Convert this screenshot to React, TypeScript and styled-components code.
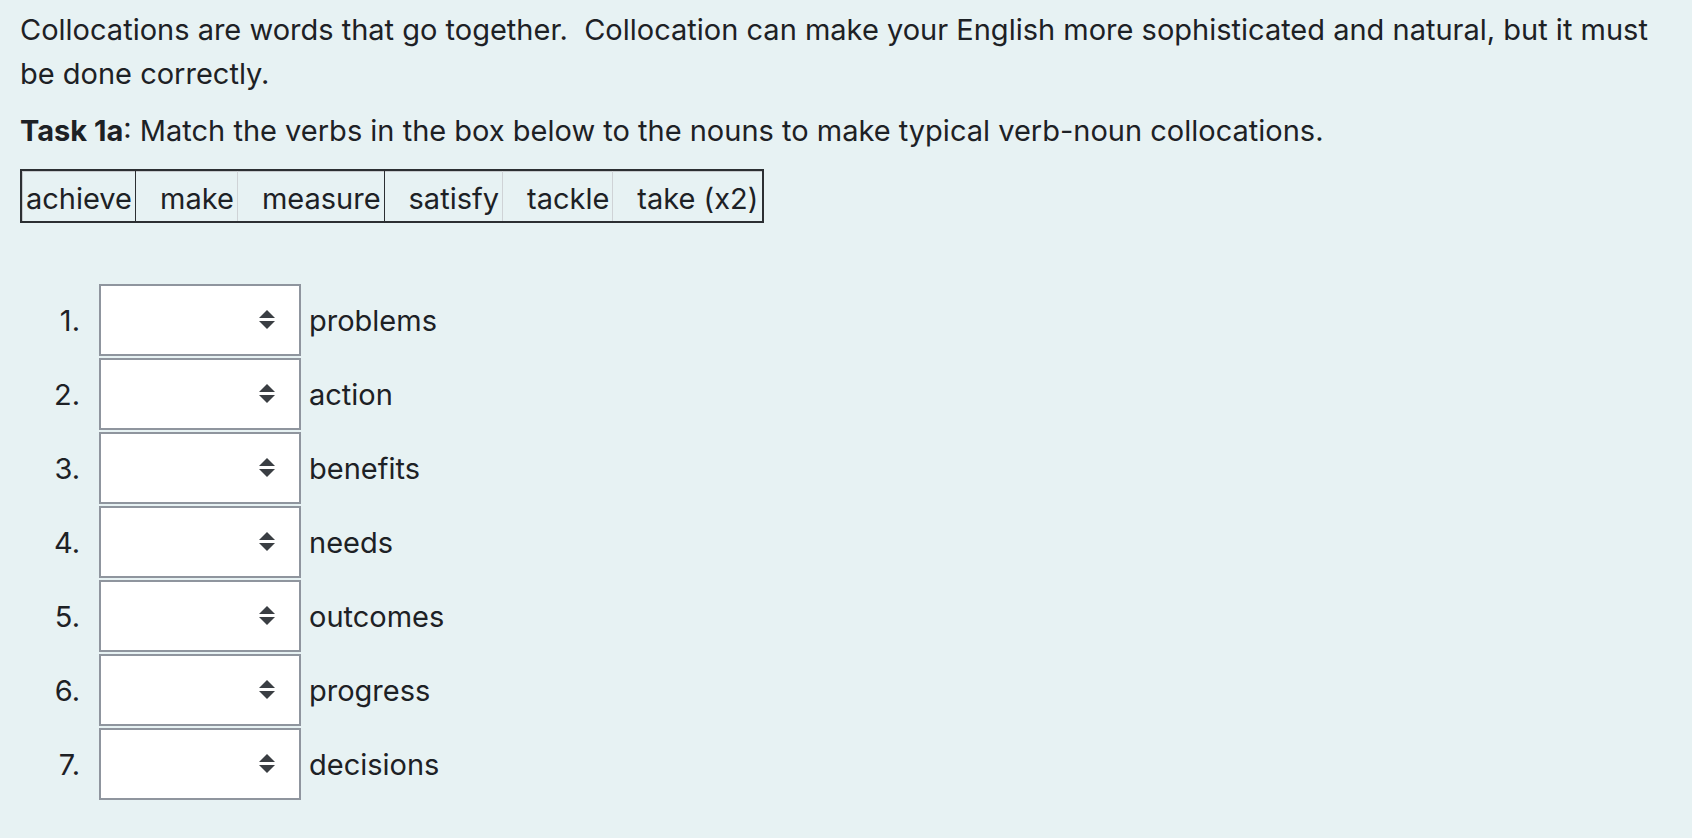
import styled, { createGlobalStyle } from "styled-components";

// ── Styles ────────────────────────────────────────────────────────────────────

const GlobalStyle = createGlobalStyle`
  html, body {
    margin: 0;
    padding: 0;
    background: #e7f2f3;
  }
  body {
    font-family: Inter, "Noto Sans", "Liberation Sans", sans-serif;
    color: #1d2125;
  }
`;

const Page = styled.div`
  padding: 8px 20px 40px 20px;
  font-size: 29px;
  line-height: 44px;
`;

const Para = styled.p<{ $gap: number }>`
  margin: 0 0 ${({ $gap }) => $gap}px 0;
  max-width: 1640px;
`;

const WordBox = styled.div`
  display: inline-flex;
  border: 2px solid #2c2f32;
  box-shadow: inset 1px 1px 0 #c6cacd;
  margin-bottom: 61px;
`;

const Word = styled.span<{ $first?: boolean; $divider: "dark" | "light" | "none" }>`
  padding: 5px 3px 0 ${({ $first }) => ($first ? 4 : 24)}px;
  line-height: 45px;
  border-right: 1px solid
    ${({ $divider }) =>
      $divider === "dark" ? "#2c2f32" : $divider === "light" ? "#cfd3d6" : "transparent"};
`;

const Items = styled.ol`
  list-style: none;
  margin: 0;
  padding: 0;
  display: flex;
  flex-direction: column;
  gap: 2px;
`;

const Item = styled.li`
  display: flex;
  align-items: center;
`;

const Num = styled.span`
  width: 60px;
  text-align: right;
  padding-top: 2px;
`;

const SelectWrap = styled.div`
  position: relative;
  margin-left: 19px;
  width: 202px;
  height: 72px;
`;

const Select = styled.select`
  appearance: none;
  box-sizing: border-box;
  width: 100%;
  height: 100%;
  margin: 0;
  border: 2px solid #8f959e;
  border-radius: 0;
  background: #fff;
  font: inherit;
  color: inherit;
`;

const Arrow = styled.svg`
  position: absolute;
  right: 26px;
  top: 26px;
  pointer-events: none;
`;

const Noun = styled.span`
  margin-left: 8px;
  padding-top: 2px;
`;

// ── Data ──────────────────────────────────────────────────────────────────────

const verbs: { text: string; divider: "dark" | "light" | "none" }[] = [
  { text: "achieve", divider: "dark" },
  { text: "make", divider: "light" },
  { text: "measure", divider: "dark" },
  { text: "satisfy", divider: "light" },
  { text: "tackle", divider: "light" },
  { text: "take (x2)", divider: "none" },
];

const nouns = ["problems", "action", "benefits", "needs", "outcomes", "progress", "decisions"];

// ── Component ─────────────────────────────────────────────────────────────────

export default function App() {
  return (
    <>
      <GlobalStyle />
      <Page>
        <Para $gap={13}>
          Collocations are words that go together.{"\u00a0 "}Collocation can make your English
          more sophisticated and natural, but it must be done correctly.
        </Para>
        <Para $gap={16}>
          <strong>Task 1a</strong>: Match the verbs in the box below to the nouns to make typical
          verb-noun collocations.
        </Para>

        <WordBox>
          {verbs.map((v, i) => (
            <Word key={v.text} $first={i === 0} $divider={v.divider}>
              {v.text}
            </Word>
          ))}
        </WordBox>

        <Items>
          {nouns.map((n, i) => (
            <Item key={n}>
              <Num>{i + 1}.</Num>
              <SelectWrap>
                <Select aria-label={`Answer ${i + 1}`} defaultValue="">
                  <option value=""></option>
                  {verbs.map((v) => (
                    <option key={v.text} value={v.text}>
                      {v.text}
                    </option>
                  ))}
                </Select>
                <Arrow width="16" height="20" viewBox="0 0 16 20">
                  <polygon points="8,0 16,8 0,8" fill="#3a3e43" />
                  <polygon points="0,11 16,11 8,19" fill="#3a3e43" />
                </Arrow>
              </SelectWrap>
              <Noun>{n}</Noun>
            </Item>
          ))}
        </Items>
      </Page>
    </>
  );
}
